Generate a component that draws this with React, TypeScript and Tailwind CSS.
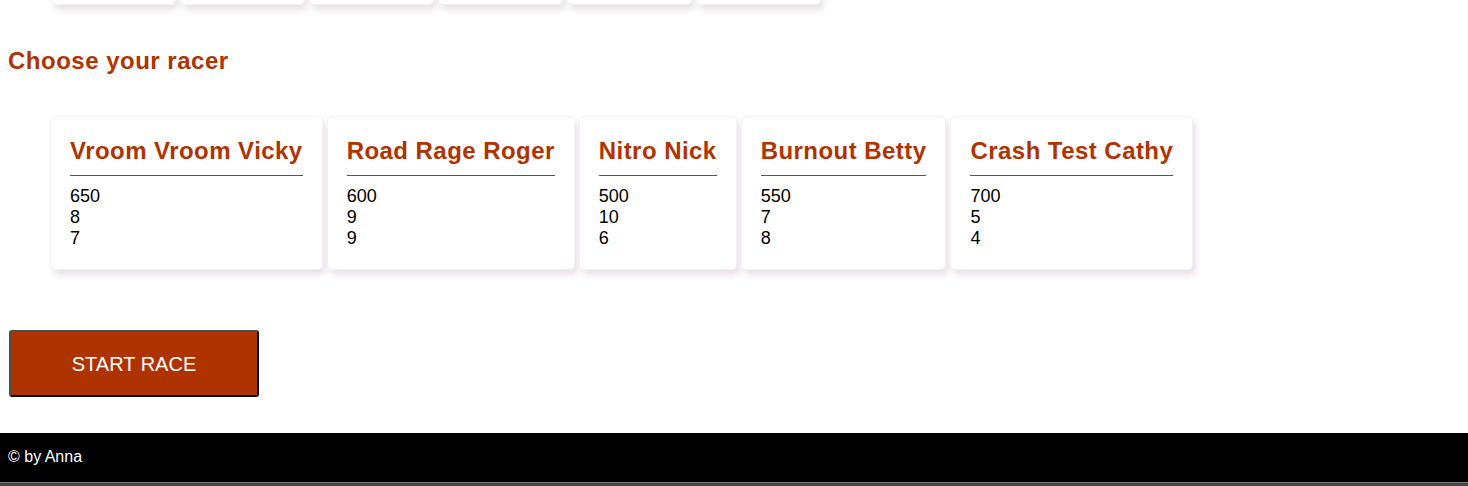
import React from 'react';

interface Racer {
  id: number;
  name: string;
  topSpeed: number;
  acceleration: number;
  handling: number;
}

const racers: Racer[] = [
  { id: 1, name: 'Vroom Vroom Vicky', topSpeed: 650, acceleration: 8, handling: 7 },
  { id: 2, name: 'Road Rage Roger', topSpeed: 600, acceleration: 9, handling: 9 },
  { id: 3, name: 'Nitro Nick', topSpeed: 500, acceleration: 10, handling: 6 },
  { id: 4, name: 'Burnout Betty', topSpeed: 550, acceleration: 7, handling: 8 },
  { id: 5, name: 'Crash Test Cathy', topSpeed: 700, acceleration: 5, handling: 4 },
];

const tracks = [1, 2, 3, 4, 5, 6];

const cardClass =
  'bg-white rounded-[5px] border border-[#f4f0f4] shadow-[3px_5px_6px_rgba(90,30,90,0.13)]';

export default function App() {
  return (
    <div className="min-h-[486px] bg-white text-black [font-family:'Liberation_Sans',Arimo,Arial,sans-serif]">
      <main className="px-2">
        {/* tracks section, mostly scrolled out of view */}
        <div className="-mt-[95px] pl-[43px] flex gap-[4px]">
          {tracks.map(t => (
            <div key={t} className={`${cardClass} w-[125px] h-[100px]`} />
          ))}
        </div>

        <h2 className="mt-[42px] text-[24px] leading-[28px] font-bold tracking-[0.5px] text-[#b03300]">Choose your racer</h2>

        <div className="mt-[41px] pl-[42px] flex items-start gap-[4px]">
          {racers.map(racer => (
            <div key={racer.id} className={`${cardClass} pt-[20px] pr-[19px] pb-[20px] pl-[19px]`}>
              <h3 className="text-[24px] leading-[28px] font-bold tracking-[0.45px] text-[#b03300] pb-[10px] border-b border-[#555]">
                {racer.name}
              </h3>
              <div className="mt-[10px] text-[18px] leading-[21px]">
                <p>{racer.topSpeed}</p>
                <p>{racer.acceleration}</p>
                <p>{racer.handling}</p>
              </div>
            </div>
          ))}
        </div>

        <button className="mt-[60px] ml-px w-[250px] h-[67px] bg-[#ae3300] text-white text-[20px] rounded-[3px] border-2 border-t-[#4d4d4d] border-l-[#4d4d4d] border-r-black border-b-black">
          START RACE
        </button>
      </main>

      <footer className="mt-[36px] bg-black text-white text-[16px] leading-[18px] h-[49px] px-2 pt-[15px]">
        © by Anna
      </footer>
      <div className="h-[4px] bg-[#454545] border-t border-[#777]" />
    </div>
  );
}
